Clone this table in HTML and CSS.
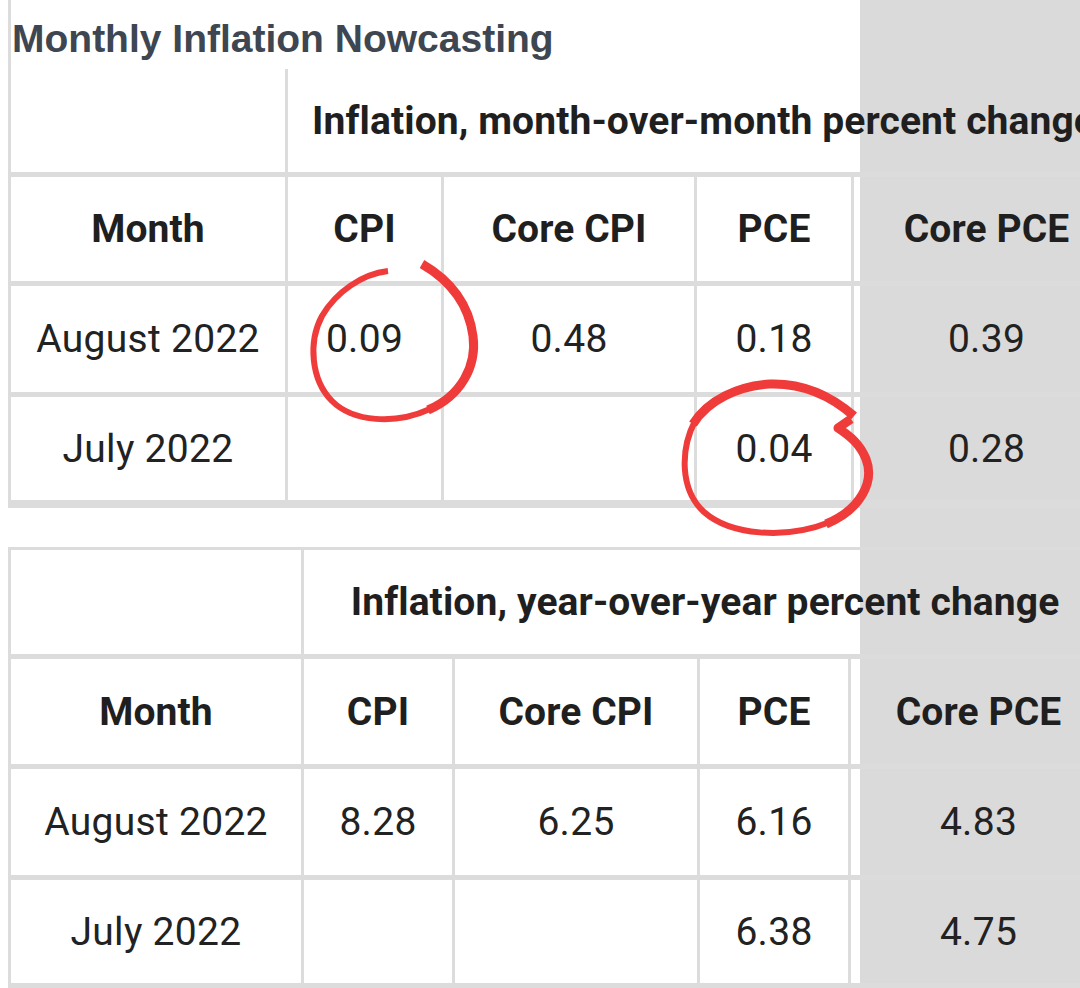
FILE: index.html
```html
<!DOCTYPE html>
<html lang="en">
<head>
<meta charset="utf-8">
<title>Monthly Inflation Nowcasting</title>
<link rel="stylesheet" href="styles.css">
</head>
<body>
<main class="page">
  <section class="tbl tbl-mom">
    <div class="cell title">Monthly Inflation Nowcasting</div>
    <div class="cell"></div>
    <div class="cell head span">Inflation, month-over-month percent change</div>
    <div class="cell head">Month</div>
    <div class="cell head">CPI</div>
    <div class="cell head">Core CPI</div>
    <div class="cell head">PCE</div>
    <div class="cell head">Core PCE</div>
    <div class="cell">August 2022</div>
    <div class="cell">0.09</div>
    <div class="cell">0.48</div>
    <div class="cell">0.18</div>
    <div class="cell">0.39</div>
    <div class="cell last">July 2022</div>
    <div class="cell last"></div>
    <div class="cell last"></div>
    <div class="cell last">0.04</div>
    <div class="cell last">0.28</div>
  </section>

  <section class="tbl tbl-yoy">
    <div class="cell"></div>
    <div class="cell head span">Inflation, year-over-year percent change</div>
    <div class="cell head">Month</div>
    <div class="cell head">CPI</div>
    <div class="cell head">Core CPI</div>
    <div class="cell head">PCE</div>
    <div class="cell head">Core PCE</div>
    <div class="cell">August 2022</div>
    <div class="cell">8.28</div>
    <div class="cell">6.25</div>
    <div class="cell">6.16</div>
    <div class="cell">4.83</div>
    <div class="cell">July 2022</div>
    <div class="cell"></div>
    <div class="cell"></div>
    <div class="cell">6.38</div>
    <div class="cell">4.75</div>
  </section>
</main>

<svg class="marks" width="1080" height="988" viewBox="0 0 1080 988" aria-hidden="true">
  <path class="ink thin" d="M388,271 C362,274 336,292 322,316 C308,342 311,380 332,401 C353,422 395,425 430,409"/>
  <path class="ink thick" d="M428,410 C461,396 477,366 473,336 C469,306 453,282 422,264"/>
  <path class="ink thick" d="M854,416 C830,395 802,383 770,384 C738,386 708,400 693,424"/>
  <path class="ink thin" d="M695,421 C680,450 680,490 704,512 C730,535 785,540 830,522"/>
  <path class="ink thick" d="M826,524 C860,510 875,482 866,459 C860,444 850,436 838,428 L851,419"/>
</svg>
</body>
</html>
```

FILE: styles.css
```css
html {
  background: linear-gradient(to right, #ffffff 860px, #dbdadb 860px);
}

body {
  margin: 0;
  position: relative;
  width: 1080px;
  height: 988px;
  overflow: hidden;
  font-family: Roboto, "Noto Sans", sans-serif;
  color: #212121;
}

.page {
  padding-left: 8px;
}

.tbl {
  display: grid;
  border-left: 3px solid #dcdcdc;
  box-sizing: content-box;
}

.tbl-mom {
  width: 1111px;
  grid-template-columns: 277px 156px 253px 157px 268px;
  grid-template-rows: 69px 108px 109px 111px 111px;
}

.tbl-yoy {
  width: 1098px;
  margin-top: 39px;
  border-top: 3px solid #dcdcdc;
  grid-template-columns: 293px 151px 245px 151px 258px;
  grid-template-rows: 109px 110px 111px 108px;
}

.cell {
  box-sizing: border-box;
  border-right: 3px solid #dcdcdc;
  border-bottom: 5px solid #dcdcdc;
  display: flex;
  align-items: center;
  justify-content: center;
  font-size: 39px;
  letter-spacing: 0.3px;
  font-weight: 400;
  color: #222222;
  white-space: nowrap;
}

.cell.last {
  border-bottom-width: 8px;
}

.head {
  font-weight: 700;
  letter-spacing: 0.1px;
  color: #1f1f1f;
}

.span {
  grid-column: 2 / span 4;
}

.title {
  grid-column: 1 / -1;
  border: none;
  display: block;
  padding: 16px 0 0 1px;
  font-family: "Liberation Sans", Arial, sans-serif;
  font-size: 39px;
  line-height: 45px;
  letter-spacing: 0;
  font-weight: 700;
  color: #3e4651;
}

.marks {
  position: absolute;
  top: 0;
  left: 0;
  pointer-events: none;
}

.ink {
  fill: none;
  stroke: #f03b3b;
  stroke-linecap: butt;
  stroke-linejoin: round;
}

.ink.thin {
  stroke-width: 6;
}

.ink.thick {
  stroke-width: 9;
}
```
